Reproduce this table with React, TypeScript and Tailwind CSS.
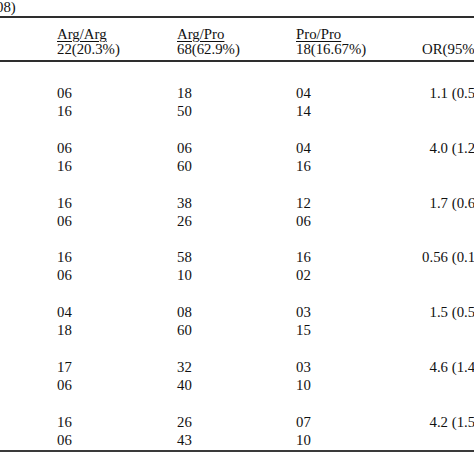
const groups = [
  { or: '1.1', ci: '(0.5', rows: [['06', '18', '04'], ['16', '50', '14']] },
  { or: '4.0', ci: '(1.2', rows: [['06', '06', '04'], ['16', '60', '16']] },
  { or: '1.7', ci: '(0.6', rows: [['16', '38', '12'], ['06', '26', '06']] },
  { or: '0.56', ci: '(0.1', rows: [['16', '58', '16'], ['06', '10', '02']] },
  { or: '1.5', ci: '(0.5', rows: [['04', '08', '03'], ['18', '60', '15']] },
  { or: '4.6', ci: '(1.4', rows: [['17', '32', '03'], ['06', '40', '10']] },
  { or: '4.2', ci: '(1.5', rows: [['16', '26', '07'], ['06', '43', '10']] },
];

const headers = [
  { label: 'Arg/Arg', count: '22(20.3%)' },
  { label: 'Arg/Pro', count: '68(62.9%)' },
  { label: 'Pro/Pro', count: '18(16.67%)' },
];

export default function App() {
  return (
    <div className="w-[474px] h-[474px] overflow-hidden bg-white text-[#111] text-[14.8px] whitespace-nowrap [font-family:'Liberation_Serif','Times_New_Roman',serif]">
      {/* caption tail */}
      <div className="h-[16px] leading-[14px] -ml-[4px]">08)</div>
      <div className="h-[2px] bg-[#2e2e2e]" />

      {/* column headers */}
      <div className="flex pt-[9px] pb-[3px] leading-[15px]">
        <div className="w-[57px] shrink-0" />
        {headers.map((h, i) => (
          <div key={h.label} className={i === 0 ? 'w-[120px] shrink-0' : 'w-[119px] shrink-0'}>
            <div className="underline decoration-1 underline-offset-[2px]">{h.label}</div>
            <div>{h.count}</div>
          </div>
        ))}
        <div className="shrink-0 pl-[7px]">
          <div>&nbsp;</div>
          <div>OR(95%</div>
        </div>
      </div>
      <div className="h-[2px] bg-[#2e2e2e]" />

      {/* body */}
      <div className="flex flex-col gap-[18.75px] pt-[22px] pb-[1.5px] leading-[18px]">
        {groups.map((g, gi) => (
          <div key={gi}>
            {g.rows.map((r, ri) => (
              <div key={ri} className="flex">
                <div className="w-[57px] shrink-0" />
                <div className="w-[120px] shrink-0">{r[0]}</div>
                <div className="w-[119px] shrink-0">{r[1]}</div>
                <div className="w-[119px] shrink-0">{r[2]}</div>
                {ri === 0 && (
                  <div className="shrink-0 -ml-[119px]">
                    <span className="inline-block w-[152px] text-right">{g.or}</span>
                    <span> {g.ci}</span>
                  </div>
                )}
              </div>
            ))}
          </div>
        ))}
      </div>
      <div className="h-[2px] bg-[#3a3a3a]" />
    </div>
  );
}
